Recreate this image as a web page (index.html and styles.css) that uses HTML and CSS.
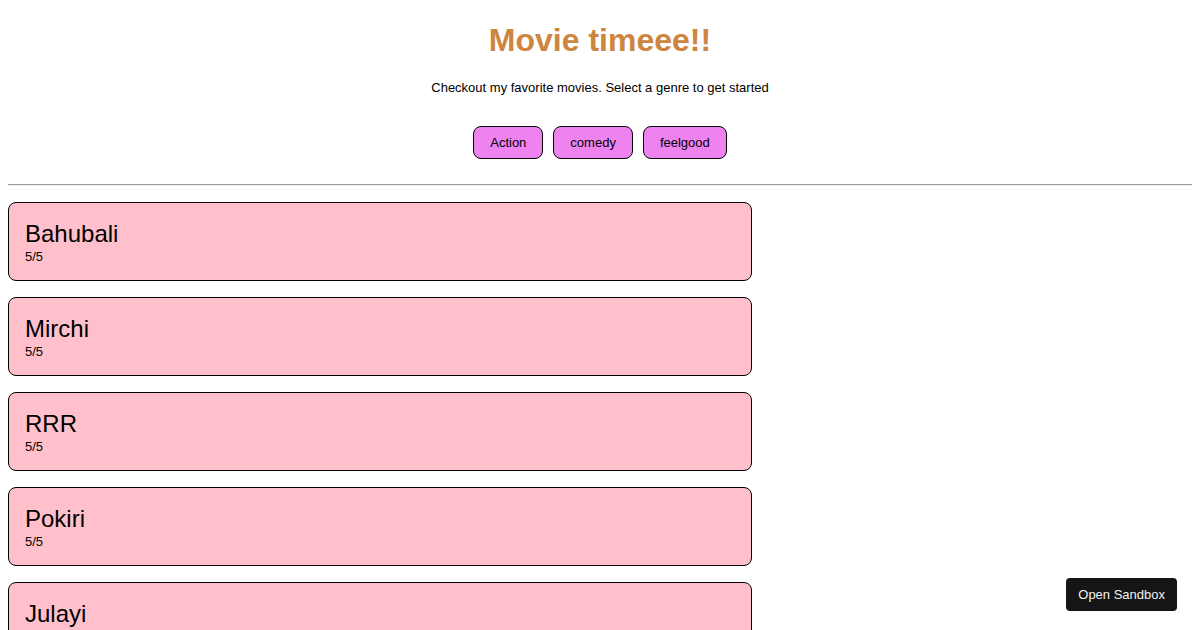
FILE: index.html
```html
<!DOCTYPE html>
<html lang="en">
<head>
  <meta charset="UTF-8">
  <meta name="viewport" content="width=device-width, initial-scale=1.0">
  <title>Movie timeee!!</title>
  <link rel="stylesheet" href="styles.css">
</head>
<body>
  <!-- Header -->
  <div class="header">
    <h1>Movie timeee!!</h1>
    <p>Checkout my favorite movies. Select a genre to get started</p>
  </div>

  <!-- Genres -->
  <div class="genres">
    <button>Action</button>
    <button>comedy</button>
    <button>feelgood</button>
  </div>

  <hr>

  <!-- Movie list -->
  <ul class="movies">
    <li class="movie">
      <div class="movie-name">Bahubali</div>
      <div class="movie-rating">5/5</div>
    </li>
    <li class="movie">
      <div class="movie-name">Mirchi</div>
      <div class="movie-rating">5/5</div>
    </li>
    <li class="movie">
      <div class="movie-name">RRR</div>
      <div class="movie-rating">5/5</div>
    </li>
    <li class="movie">
      <div class="movie-name">Pokiri</div>
      <div class="movie-rating">5/5</div>
    </li>
    <li class="movie">
      <div class="movie-name">Julayi</div>
      <div class="movie-rating">5/5</div>
    </li>
  </ul>

  <a class="sandbox" href="#">Open Sandbox</a>
</body>
</html>
```

FILE: styles.css
```css
body {
  font-family: "Liberation Sans", Arial, sans-serif;
  margin: 8px;
  color: #000;
}
.header {
  text-align: center;
}
.header h1 {
  margin: 14px 0 0;
  font-size: 32px;
  line-height: 37px;
  color: peru;
}
.header p {
  margin: 21px 0 0;
  font-size: 13px;
  line-height: 15px;
}
.genres {
  display: flex;
  justify-content: center;
  gap: 10px;
  margin-top: 31px;
}
.genres button {
  font-family: inherit;
  font-size: 13px;
  line-height: 15px;
  padding: 8px 16px;
  background-color: violet;
  color: #000;
  border: 1px solid #000;
  border-radius: 8px;
  cursor: pointer;
}
hr {
  margin: 25px 0 0;
  border: none;
  border-top: 1px solid #9a9a9a;
  border-bottom: 1px solid #eee;
}
.movies {
  list-style: none;
  margin: 0;
  padding: 0;
}
.movie {
  width: 60%;
  margin-top: 16px;
  padding: 16px;
  background-color: pink;
  border: 1px solid #000;
  border-radius: 8px;
}
.movie-name {
  font-size: 24px;
  line-height: 30px;
}
.movie-rating {
  font-size: 13px;
  line-height: 15px;
}
.sandbox {
  position: fixed;
  right: 23px;
  bottom: 19px;
  padding: 0 12px;
  height: 33px;
  line-height: 33px;
  font-size: 13px;
  color: #f2f2f2;
  background-color: #151515;
  border-radius: 4px;
  text-decoration: none;
}
```
